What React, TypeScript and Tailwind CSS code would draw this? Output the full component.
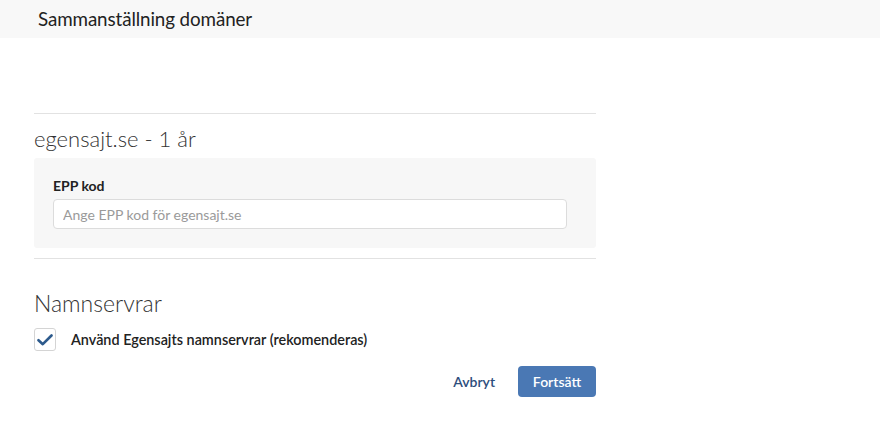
import { useState } from "react";

export default function App() {
  const [useOurs, setUseOurs] = useState(true);

  return (
    <div className="min-h-screen bg-white text-[#333] font-['Lato','Open_Sans',sans-serif]">
      <header className="h-[38px] bg-[#f8f8f8] pl-[38px] flex items-center">
        <h1 className="text-[18.8px] text-[#222] tracking-[-0.1px]">Sammanställning domäner</h1>
      </header>

      <main className="w-[562px] ml-[34px] pt-[75px]">
        <div className="border-t border-[#e2e2e2]" />

        <h2 className="mt-[10px] text-[22px] font-light leading-[30px] text-[#333]">egensajt.se - 1 år</h2>

        <div className="mt-[4px] bg-[#f7f7f7] rounded-[3px] pl-[19px] pr-[29px] pt-[19px] pb-[19px]">
          <label className="block text-[14px] font-bold text-[#222] leading-[17px]">EPP kod</label>
          <input
            type="text"
            placeholder="Ange EPP kod för egensajt.se"
            className="mt-[5px] w-full h-[30px] bg-white border border-[#dcdcdc] rounded-[4px] px-[9px] text-[14px] placeholder:text-[#9a9a9a] outline-none"
          />
        </div>

        <div className="mt-[10px] border-t border-[#e2e2e2]" />

        <h2 className="mt-[29px] text-[23px] font-light leading-[30px] text-[#333]">Namnservrar</h2>

        <label className="mt-[10px] flex items-center gap-[15px] cursor-pointer">
          <button
            type="button"
            onClick={() => setUseOurs(!useOurs)}
            className="w-[22px] h-[23px] border border-[#d4d4d4] rounded-[3px] bg-white flex items-center justify-center"
          >
            {useOurs && (
              <svg width="16" height="12" viewBox="0 0 16 12" fill="none">
                <path d="M1.5 6.2 L5.8 10.2 L14.5 1.5" stroke="#2d5a8c" strokeWidth="2.6" strokeLinecap="round" strokeLinejoin="round" />
              </svg>
            )}
          </button>
          <span className="text-[14.4px] font-semibold text-[#222]">Använd Egensajts namnservrar (rekomenderas)</span>
        </label>

        <div className="mt-[15px] flex justify-end items-center gap-[23px]">
          <button type="button" className="text-[14px] font-semibold text-[#2d4d7c]">Avbryt</button>
          <button type="button" className="w-[78px] h-[31px] bg-[#4a78b4] rounded-[4px] text-white text-[14px] font-semibold">
            Fortsätt
          </button>
        </div>
      </main>
    </div>
  );
}
